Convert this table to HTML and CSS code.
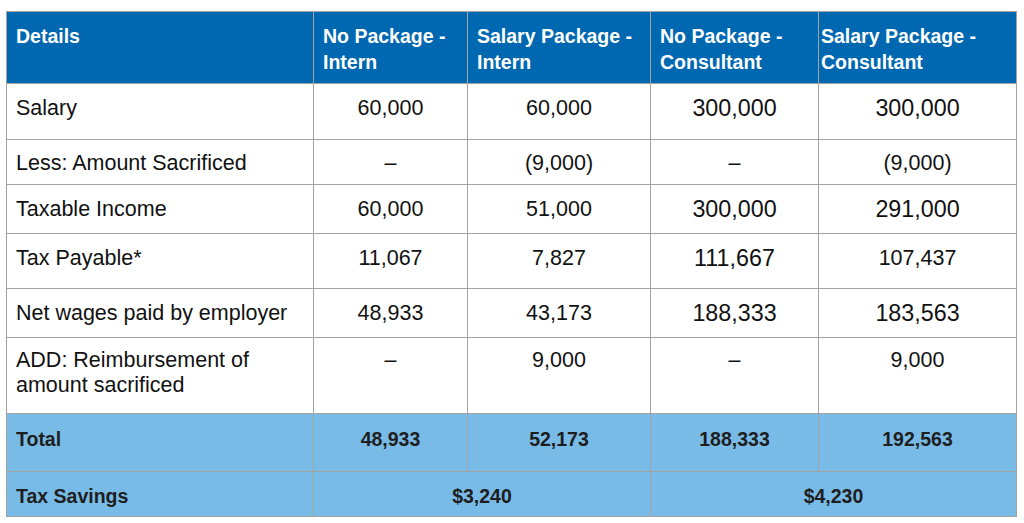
FILE: index.html
```html
<!DOCTYPE html>
<html lang="en">
<head>
<meta charset="utf-8">
<title>Salary Packaging Comparison</title>
<link rel="stylesheet" href="styles.css">
</head>
<body>
<table class="cmp">
  <colgroup>
    <col class="c-details">
    <col class="c-ni">
    <col class="c-si">
    <col class="c-nc">
    <col class="c-sc">
  </colgroup>
  <thead>
    <tr class="r-head">
      <th>Details</th>
      <th>No Package -<br>Intern</th>
      <th>Salary Package -<br>Intern</th>
      <th>No Package -<br>Consultant</th>
      <th class="tight">Salary Package -<br>Consultant</th>
    </tr>
  </thead>
  <tbody>
    <tr class="r-salary">
      <td class="lbl">Salary</td>
      <td class="num">60,000</td>
      <td class="num">60,000</td>
      <td class="num lg">300,000</td>
      <td class="num lg">300,000</td>
    </tr>
    <tr class="r-less">
      <td class="lbl">Less: Amount Sacrificed</td>
      <td class="num">–</td>
      <td class="num">(9,000)</td>
      <td class="num">–</td>
      <td class="num">(9,000)</td>
    </tr>
    <tr class="r-taxable">
      <td class="lbl">Taxable Income</td>
      <td class="num">60,000</td>
      <td class="num">51,000</td>
      <td class="num lg">300,000</td>
      <td class="num lg">291,000</td>
    </tr>
    <tr class="r-payable">
      <td class="lbl">Tax Payable*</td>
      <td class="num">11,067</td>
      <td class="num">7,827</td>
      <td class="num lg">111,667</td>
      <td class="num">107,437</td>
    </tr>
    <tr class="r-net">
      <td class="lbl">Net wages paid by employer</td>
      <td class="num">48,933</td>
      <td class="num">43,173</td>
      <td class="num lg">188,333</td>
      <td class="num lg">183,563</td>
    </tr>
    <tr class="r-add">
      <td class="lbl">ADD: Reimbursement of<br>amount sacrificed</td>
      <td class="num">–</td>
      <td class="num">9,000</td>
      <td class="num">–</td>
      <td class="num">9,000</td>
    </tr>
    <tr class="r-total hl">
      <td class="lbl">Total</td>
      <td class="num">48,933</td>
      <td class="num">52,173</td>
      <td class="num">188,333</td>
      <td class="num">192,563</td>
    </tr>
    <tr class="r-savings hl">
      <td class="lbl">Tax Savings</td>
      <td class="num" colspan="2">$3,240</td>
      <td class="num" colspan="2">$4,230</td>
    </tr>
  </tbody>
</table>
</body>
</html>
```

FILE: styles.css
```css
html, body {
  margin: 0;
  padding: 0;
  background: #ffffff;
}

body {
  font-family: "Liberation Sans", Arial, sans-serif;
  color: #111111;
}

.cmp {
  margin: 11px 0 0 6px;
  width: 1010px;
  table-layout: fixed;
  border-collapse: collapse;
  border: 1px solid #a3a3a3;
}

.c-details { width: 307px; }
.c-ni { width: 154px; }
.c-si { width: 183px; }
.c-nc { width: 168px; }
.c-sc { width: 198px; }

.cmp th,
.cmp td {
  border: 1px solid #a3a3a3;
  vertical-align: top;
  padding: 11px 9px 0 9px;
}

.cmp th {
  background: #0067b1;
  color: #ffffff;
  font-weight: bold;
  font-size: 19.5px;
  line-height: 26px;
  text-align: left;
  padding-top: 11px;
}

.cmp th.tight {
  padding-left: 2px;
}

.cmp td {
  font-size: 21.5px;
  line-height: 25px;
}

.cmp td.num {
  text-align: center;
  padding-left: 0;
  padding-right: 0;
}

.cmp td.lg {
  font-size: 23.3px;
}

.r-head { height: 72px; }
.r-salary { height: 56px; }
.r-less { height: 45px; }
.r-taxable { height: 49px; }
.r-payable { height: 55px; }
.r-net { height: 49px; }
.r-add { height: 76px; }
.r-total { height: 58px; }
.r-savings { height: 45px; }

.r-salary td { padding-top: 12px; }

.r-taxable td,
.r-payable td,
.r-net td { padding-top: 12px; }

.r-add td { padding-top: 10px; }

.hl td {
  background: #79bbe7;
  color: #1e1e1e;
  font-weight: bold;
  font-size: 19.5px;
}

.r-total td { padding-top: 13px; }
.r-savings td { padding-top: 12px; }
```
